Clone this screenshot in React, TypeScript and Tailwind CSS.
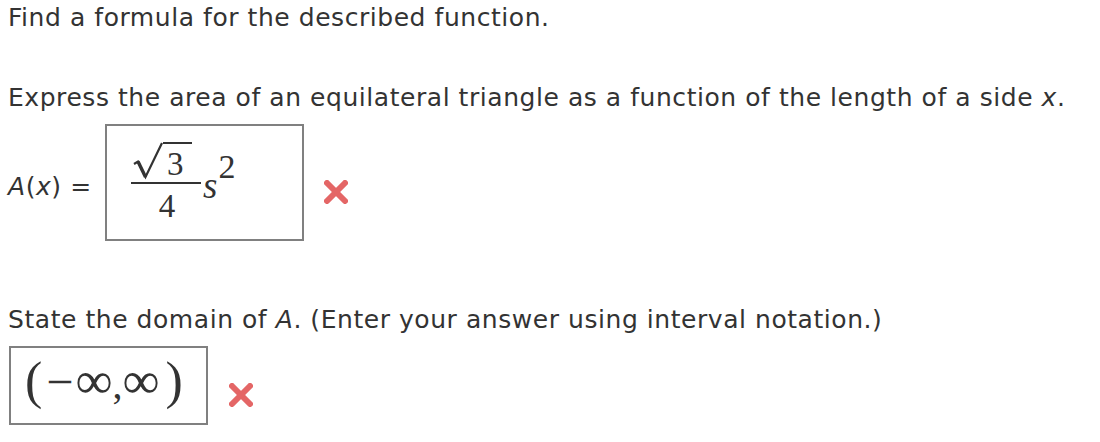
import React from 'react';

const WrongMark: React.FC<{ className?: string }> = ({ className }) => (
  <svg viewBox="0 0 28 28" className={className}>
    <g stroke="#e04c4c" strokeWidth="6" strokeLinecap="round" opacity="0.85">
      <line x1="5" y1="5" x2="23" y2="23" />
      <line x1="23" y1="5" x2="5" y2="23" />
    </g>
  </svg>
);

const Radical: React.FC = () => (
  <svg viewBox="0 0 30 38" className="w-[30px] h-[38px] shrink-0">
    <path d="M1 22 L5 19.5 L12.5 35 L29 1" fill="none" stroke="#333333" strokeWidth="2.2" strokeLinejoin="miter" />
    <path d="M5 19.5 L12.5 35" fill="none" stroke="#333333" strokeWidth="3.4" />
  </svg>
);

const App: React.FC = () => {
  const body = { fontFamily: '"DejaVu Sans", Verdana, sans-serif' };
  const math = { fontFamily: '"Liberation Serif", "Times New Roman", serif' };

  return (
    <div
      className="w-[1100px] h-[442px] bg-white text-[#333333] text-[25px] leading-[28px] tracking-[0.55px] pl-[8px] pt-[4px]"
      style={body}
    >
      <p>Find a formula for the described function.</p>

      <p className="mt-[52px]">
        Express the area of an equilateral triangle as a function of the length of a side <i>x</i>.
      </p>

      <div className="flex items-center mt-[12px]">
        <span className="w-[97px] mt-[8px]">
          <i>A</i>(<i>x</i>) =
        </span>
        <div
          className="w-[199px] h-[117px] border-2 border-[#808080] flex items-start pl-[24px] pt-[16px] tracking-normal"
          style={math}
        >
          <div className="flex flex-col w-[70px]">
            <div className="h-[40px] flex items-start pl-[2px]">
              <Radical />
              <span className="border-t-2 border-[#333333] text-[33px] leading-[32px] pt-[4px] pl-[4px] pr-[8px]">3</span>
            </div>
            <span className="h-[2px] bg-[#333333]" />
            <span className="text-[33px] leading-[32px] mt-[6px] text-center pl-[2px]">4</span>
          </div>
          <span className="text-[37px] leading-[32px] italic mt-[28px] ml-[2px]">s</span>
          <span className="text-[34px] leading-[32px] mt-[9px] ml-[1px]">2</span>
        </div>
        <WrongMark className="w-[28px] h-[28px] ml-[18px] mt-[18px]" />
      </div>

      <p className="mt-[65px]">
        State the domain of <i>A</i>. (Enter your answer using interval notation.)
      </p>

      <div className="flex items-center mt-[12px] pl-[1px]">
        <div
          className="w-[199px] h-[79px] border-2 border-[#808080] flex items-baseline pl-[14px] pt-[7px] leading-[52px] tracking-normal"
          style={math}
        >
          <span className="text-[52px]">(</span>
          <span className="text-[48px] ml-[4px]">−</span>
          <span className="text-[52px] ml-[2px]">∞</span>
          <span className="text-[40px]">,</span>
          <span className="text-[52px]">∞</span>
          <span className="text-[52px] ml-[6px]">)</span>
        </div>
        <WrongMark className="w-[28px] h-[28px] ml-[19px] mt-[19px]" />
      </div>
    </div>
  );
};

export default App;
